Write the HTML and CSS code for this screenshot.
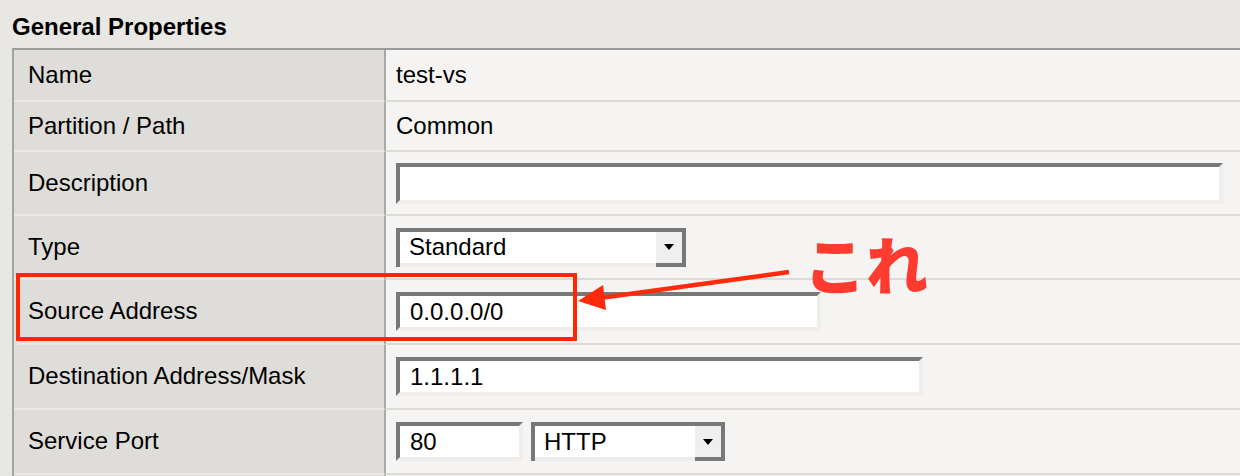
FILE: index.html
```html
<!DOCTYPE html>
<html lang="ja">
<head>
<meta charset="utf-8">
<title>General Properties</title>
<link rel="stylesheet" href="styles.css">
</head>
<body>
<div class="page">
  <h2 class="section-title">General Properties</h2>
  <div class="props">
    <div class="row row-short1">
      <div class="label">Name</div>
      <div class="value">test-vs</div>
    </div>
    <div class="row row-short2">
      <div class="label">Partition / Path</div>
      <div class="value">Common</div>
    </div>
    <div class="row row-tall">
      <div class="label">Description</div>
      <div class="value"><div class="field w-desc tall"></div></div>
    </div>
    <div class="row row-tall">
      <div class="label">Type</div>
      <div class="value">
        <div class="select w-type"><span class="select-text">Standard</span><span class="select-btn"><span class="tri"></span></span></div>
      </div>
    </div>
    <div class="row row-tall2">
      <div class="label">Source Address</div>
      <div class="value"><div class="field w-src">0.0.0.0/0</div></div>
    </div>
    <div class="row row-tall2">
      <div class="label">Destination Address/Mask</div>
      <div class="value"><div class="field w-dst">1.1.1.1</div></div>
    </div>
    <div class="row row-tall2">
      <div class="label">Service Port</div>
      <div class="value port">
        <div class="field w-port">80</div>
        <div class="select w-http"><span class="select-text">HTTP</span><span class="select-btn"><span class="tri"></span></span></div>
      </div>
    </div>
    <div class="row row-tall2">
      <div class="label"></div>
      <div class="value"></div>
    </div>
  </div>

  <div class="callout-box"></div>
  <svg class="callout-arrow" width="1240" height="476" viewBox="0 0 1240 476" aria-hidden="true">
    <line x1="789" y1="272" x2="600" y2="298" stroke="#ff2a0c" stroke-width="4.5" stroke-linecap="butt"/>
    <polygon points="578,301 603,285 606,310" fill="#ff2a0c"/>
  </svg>
  <div class="callout-text">これ</div>
</div>
</body>
</html>
```

FILE: styles.css
```css
html, body {
  margin: 0;
  padding: 0;
}
body {
  background: #e9e7e3;
  font-family: "Liberation Sans", Arial, Helvetica, sans-serif;
  color: #000;
  overflow: hidden;
}
.page {
  position: relative;
  width: 1240px;
  height: 476px;
  overflow: hidden;
}
.section-title {
  margin: 0;
  height: 48px;
  box-sizing: border-box;
  padding: 13px 0 0 12px;
  font-size: 24px;
  font-weight: bold;
  line-height: 28px;
}
.props {
  margin-left: 12px;
  border-top: 2px solid #9b9b9b;
  border-left: 2px solid #a3a3a3;
}
.row {
  display: grid;
  grid-template-columns: 370px 1fr;
}
.row-short1 { height: 52px; }
.row-short2 { height: 50px; }
.row-tall { height: 64px; }
.row-tall2 { height: 65px; }
.label {
  background: #dfddd9;
  border-bottom: 2px solid #e9e8e5;
  display: flex;
  align-items: center;
  padding-left: 14px;
  padding-bottom: 1px;
  font-size: 24px;
}
.value {
  background: #f5f4f2;
  border-left: 2px solid #a8a8a8;
  border-bottom: 2px solid #dcdad6;
  display: flex;
  align-items: center;
  gap: 8px;
  padding-left: 10px;
  font-size: 24px;
}
.field {
  box-sizing: border-box;
  height: 39px;
  background: #fff;
  border: 4px solid;
  border-color: #787878 #efeeec #efeeec #787878;
  padding-left: 10px;
  display: flex;
  align-items: center;
  font-size: 24px;
}
.field.tall { height: 41px; }
.w-desc { width: 827px; }
.w-src { width: 425px; }
.w-dst { width: 527px; }
.w-port { width: 127px; }
.select {
  box-sizing: border-box;
  height: 39px;
  display: flex;
  border-top: 4px solid #787878;
  border-left: 4px solid #787878;
  background: #fff;
}
.w-type { width: 290px; }
.w-http { width: 194px; }
.select-text {
  flex: 1;
  display: flex;
  align-items: center;
  padding-left: 9px;
  border-bottom: 4px solid #efeeec;
  font-size: 24px;
}
.select-btn {
  width: 26px;
  background: #efefef;
  border-right: 4px solid #787878;
  border-bottom: 4px solid #787878;
  display: flex;
  align-items: center;
  justify-content: center;
}
.tri {
  width: 0;
  height: 0;
  border-left: 5px solid transparent;
  border-right: 5px solid transparent;
  border-top: 6px solid #000;
}
.callout-box {
  position: absolute;
  left: 16px;
  top: 273px;
  width: 561px;
  height: 68px;
  box-sizing: border-box;
  border: 4px solid #ff2600;
}
.callout-arrow {
  position: absolute;
  left: 0;
  top: 0;
}
.callout-text {
  position: absolute;
  left: 804px;
  top: 232px;
  font-family: "Noto Sans CJK JP", sans-serif;
  font-weight: 900;
  font-size: 62px;
  line-height: 1;
  color: #ff3b30;
}
```
